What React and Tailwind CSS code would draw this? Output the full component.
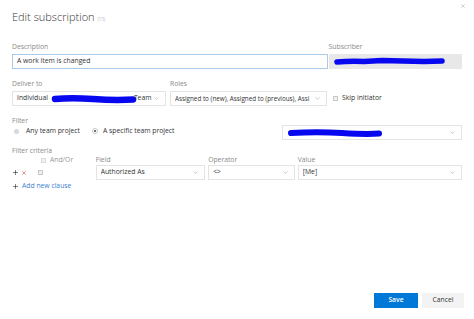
import { ChevronDown, X, Plus } from "lucide-react";

// blue redaction scribble
const Scribble = ({ w, h = 8, d, sw = 5, className = "" }) => (
  <svg width={w} height={h} viewBox={`0 0 ${w} ${h}`} className={`shrink-0 ${className}`}>
    <path d={d} stroke="#0808f0" strokeWidth={sw} strokeLinecap="round" strokeLinejoin="round" fill="none" />
  </svg>
);

const Label = ({ children, className = "" }) => (
  <div className={`text-[6.8px] leading-[9px] text-[#8a8a8a] ${className}`}>{children}</div>
);

const Select = ({ children, className = "" }) => (
  <div
    className={`h-[15px] flex items-center border border-[#e4e4e4] bg-white pl-[4px] pr-[5px] text-[6.8px] text-[#333] ${className}`}
  >
    <div className="flex-1 min-w-0 flex items-center overflow-hidden whitespace-nowrap">{children}</div>
    <ChevronDown size={7} strokeWidth={1.3} className="text-[#777] shrink-0" />
  </div>
);

const Check = ({ className = "" }) => (
  <span className={`inline-block w-[5px] h-[5px] border border-[#c8c8c8] bg-[#f0f0f0] ${className}`} />
);

export default function App() {
  return (
    <div className="w-[474px] h-[319px] bg-white relative font-['Open_Sans',sans-serif] text-[#333]">
      {/* close */}
      <button className="absolute right-[8px] top-[3px] text-[#888]">
        <X size={6} strokeWidth={1.4} />
      </button>

      <div className="px-[12px] pt-[10px] flex flex-col">
        <h1 className="text-[11px] font-light leading-[14px] text-[#333]">
          Edit subscription <span className="text-[4.5px] text-[#888]">(13)</span>
        </h1>

        {/* description / subscriber */}
        <div className="flex mt-[16px] gap-[1px]">
          <div className="w-[317px]">
            <Label>Description</Label>
            <div className="mt-[3px] h-[15px] border border-[#a9cbe9] flex items-center pl-[4px] text-[6.8px]">
              A work item is changed
            </div>
          </div>
          <div className="w-[134px]">
            <Label>Subscriber</Label>
            <div className="mt-[3px] h-[15px] bg-[#e8e8e8] flex items-center pl-[5px]">
              <Scribble w={112} h={9} sw={5.5} d="M3 5 Q15 4 30 4.5 L48 3.5 Q70 4 90 4.5 L108 4" />
            </div>
          </div>
        </div>

        {/* deliver to / roles */}
        <div className="flex mt-[10px]">
          <div className="w-[154px]">
            <Label>Deliver to</Label>
            <Select className="mt-[3px]">
              <span>Individual</span>
              <Scribble w={86} h={10} sw={6.5} className="ml-[3px]" d="M4 5 Q20 3.5 42 5 T82 5.5" />
              <span className="-ml-[3px]">Team</span>
            </Select>
          </div>
          <div className="w-[157px] ml-[4px]">
            <Label>Roles</Label>
            <Select className="mt-[3px]">
              <span className="text-[6.3px]">Assigned to (new), Assigned to (previous), Assi</span>
            </Select>
          </div>
          <div className="ml-[6px] pt-[12px] flex items-center h-[27px] text-[6.8px]">
            <Check />
            <span className="ml-[4px]">Skip initiator</span>
          </div>
        </div>

        {/* filter */}
        <Label className="mt-[10px]">Filter</Label>
        <div className="flex items-start">
          <div className="flex items-center h-[12px] text-[6.8px] pl-[2px]">
            <span className="w-[5px] h-[5px] rounded-full bg-[#d8d8d8]" />
            <span className="ml-[7px]">Any team project</span>
            <span className="ml-[12px] w-[6px] h-[6px] rounded-full border border-[#c8c8c8] flex items-center justify-center">
              <span className="w-[2px] h-[2px] rounded-full bg-[#444]" />
            </span>
            <span className="ml-[5px]">A specific team project</span>
          </div>
          <Select className="ml-auto w-[180px] h-[15px]">
            <Scribble w={96} h={10} sw={6} d="M4 5 Q30 3.5 55 5 T92 5.5" />
          </Select>
        </div>

        {/* filter criteria */}
        <Label className="mt-[6px]">Filter criteria</Label>
        <div className="flex">
          <div className="w-[84px] flex flex-col text-[6.8px]">
            <div className="h-[10px] flex items-center pl-[29px] text-[#999]">
              <Check className="border-[#ddd]" />
              <span className="ml-[4px]">And/Or</span>
            </div>
            <div className="h-[15px] flex items-center">
              <Plus size={7} strokeWidth={2} className="text-[#222]" />
              <X size={6} strokeWidth={2} className="ml-[2px] text-[#d0202a]" />
              <Check className="ml-[11px]" />
            </div>
          </div>
          <div className="w-[110px]">
            <Label>Field</Label>
            <Select className="mt-[1px]">Authorized As</Select>
          </div>
          <div className="w-[87px] ml-[3px]">
            <Label>Operator</Label>
            <Select className="mt-[1px]">&lt;&gt;</Select>
          </div>
          <div className="w-[165px] ml-[3px]">
            <Label>Value</Label>
            <Select className="mt-[1px]">[Me]</Select>
          </div>
        </div>
        <div className="mt-[1px] flex items-center h-[10px] text-[6.8px]">
          <Plus size={7} strokeWidth={2} className="text-[#222]" />
          <span className="ml-[3px] text-[#3a7fd0]">Add new clause</span>
        </div>
      </div>

      {/* footer */}
      <div className="absolute right-[10px] top-[293px] flex gap-[4px] text-[6.8px]">
        <button className="w-[44px] h-[15px] bg-[#0078d7] text-white font-semibold">Save</button>
        <button className="w-[42px] h-[15px] bg-[#f3f3f3] text-[#333]">Cancel</button>
      </div>
    </div>
  );
}
